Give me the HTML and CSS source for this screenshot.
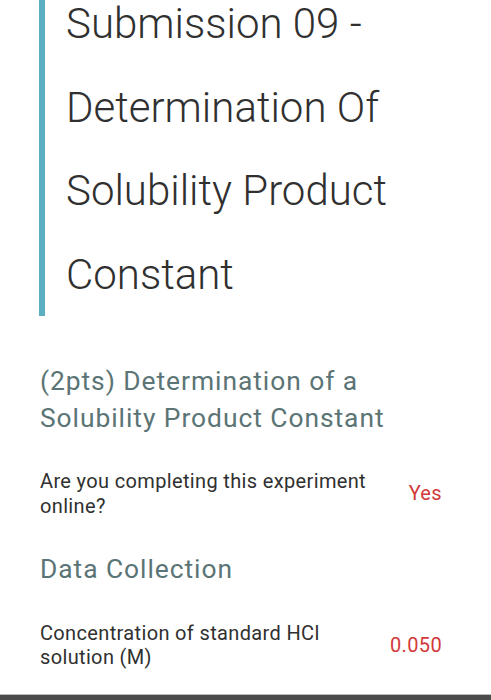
FILE: index.html
```html
<!DOCTYPE html>
<html lang="en">
<head>
<meta charset="utf-8">
<title>Submission 09</title>
<link rel="stylesheet" href="styles.css">
</head>
<body>
<div class="page">
  <main class="content">
    <div class="title-block">
      <h1 class="title">Submission 09 - Determination Of Solubility Product Constant</h1>
    </div>
    <h2 class="section-heading">(2pts) Determination of a Solubility Product Constant</h2>
    <div class="row">
      <div class="label">Are you completing this experiment online?</div>
      <div class="value">Yes</div>
    </div>
    <h2 class="section-heading">Data Collection</h2>
    <div class="row">
      <div class="label">Concentration of standard HCl solution (M)</div>
      <div class="value">0.050</div>
    </div>
  </main>
  <div class="navbar"></div>
</div>
</body>
</html>
```
FILE: styles.css
```css
html, body {
  margin: 0;
  padding: 0;
  background: #ffffff;
  overflow: hidden;
}
.page {
  height: 700px;
  display: flex;
  flex-direction: column;
  font-family: Roboto, "Liberation Sans", sans-serif;
}
.content {
  flex: 1;
  padding: 0 49px 0 40px;
}
.title-block {
  margin: -18px 0 0 -1px;
  border-left: 6px solid #5ab0c1;
  padding-left: 21px;
}
.title {
  margin: 0;
  font-size: 42px;
  font-weight: 300;
  line-height: 83.5px;
  color: #303030;
}
.section-heading {
  margin: 47px 0 0 0;
  font-size: 26.4px;
  font-weight: 400;
  letter-spacing: 0.95px;
  line-height: 36.5px;
  color: #5b7475;
}
.row + .section-heading {
  margin-top: 33px;
}
.row {
  margin-top: 33px;
  display: flex;
  align-items: center;
  gap: 2px;
}
.label {
  flex: 1;
  font-size: 20px;
  letter-spacing: 0.35px;
  line-height: 24.5px;
  color: #303030;
}
.value {
  flex: 0 0 60px;
  text-align: right;
  font-size: 20px;
  letter-spacing: 0.35px;
  line-height: 24.5px;
  color: #d13a3a;
}
.navbar {
  height: 5px;
  background: #4b4b4b;
  border-top: 1px solid #bdbdbd;
  margin-top: auto;
}
```
